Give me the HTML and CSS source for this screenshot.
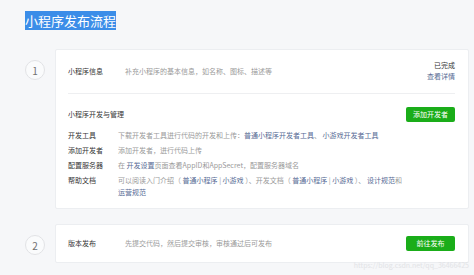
FILE: index.html
```html
<!DOCTYPE html>
<html lang="zh-CN">
<head>
    <meta charset="UTF-8">
    <meta name="viewport" content="width=device-width, initial-scale=1.0">
    <title>小程序发布流程</title>
    <link rel="stylesheet" href="styles.css">
</head>
<body>
    <div class="page">
        <h1 class="title"><span class="selected">小程序发布流程</span></h1>

        <div class="step">
            <div class="step-num"><span class="circle">1</span></div>
            <div class="card">
                <div class="section info">
                    <span class="label">小程序信息</span>
                    <span class="desc">补充小程序的基本信息，如名称、图标、描述等</span>
                    <div class="status">
                        <div>已完成</div>
                        <a class="link">查看详情</a>
                    </div>
                </div>

                <div class="section dev">
                    <div class="dev-head">
                        <span>小程序开发与管理</span>
                        <button class="btn">添加开发者</button>
                    </div>
                    <dl class="rows">
                        <dt>开发工具</dt>
                        <dd>下载开发者工具进行代码的开发和上传：<a class="link">普通小程序开发者工具</a>、 <a class="link">小游戏开发者工具</a></dd>

                        <dt>添加开发者</dt>
                        <dd>添加开发者，进行代码上传</dd>

                        <dt>配置服务器</dt>
                        <dd>在 <a class="link">开发设置</a>页面查看AppID和AppSecret，配置服务器域名</dd>

                        <dt>帮助文档</dt>
                        <dd>可以阅读入门介绍（ <a class="link">普通小程序</a> | <a class="link">小游戏</a> ）、开发文档（ <a class="link">普通小程序</a> | <a class="link">小游戏</a> ）、 <a class="link">设计规范</a>和 <a class="link">运营规范</a></dd>
                    </dl>
                </div>
            </div>
        </div>

        <div class="step">
            <div class="step-num"><span class="circle">2</span></div>
            <div class="card">
                <div class="section publish">
                    <span class="label">版本发布</span>
                    <span class="desc">先提交代码，然后提交审核，审核通过后可发布</span>
                    <button class="btn">前往发布</button>
                </div>
            </div>
        </div>

        <div class="watermark">https://blog.csdn.net/qq_36466425</div>
    </div>
</body>
</html>
```

FILE: styles.css
```css
body {
    margin: 0;
    background: #f6f7f9;
    font-family: "Noto Sans CJK SC", "Noto Sans", sans-serif;
    color: #353535;
}

.page {
    position: relative;
    height: 275px;
    padding: 12px 5px 0 0;
    box-sizing: border-box;
}

.title {
    margin: 0 0 20px 25px;
    font-size: 13px;
    line-height: 17px;
    font-weight: 400;
}

.selected {
    background: #3b8de8;
    color: #fff;
}

.step {
    display: flex;
    margin-bottom: 15px;
}

.step-num {
    width: 55px;
    flex: none;
    padding: 11px 0 0 25px;
    box-sizing: border-box;
}

.circle {
    display: flex;
    align-items: center;
    justify-content: center;
    width: 20px;
    height: 20px;
    box-sizing: border-box;
    border: 1px solid #e2e3e6;
    border-radius: 50%;
    background: #fafbfc;
    font-size: 10px;
    color: #707070;
}

.card {
    flex: 1;
    background: #fff;
    border: 1px solid #eceef1;
    border-radius: 2px;
    padding: 0 13px 0 12px;
}

.section {
    font-size: 7px;
    line-height: 11px;
}

.info {
    display: flex;
    align-items: center;
    padding: 10px 0 11px;
    border-bottom: 1px solid #eeeff1;
}

.label {
    width: 57px;
    flex: none;
}

.desc {
    flex: 1;
    color: #9a9a9a;
}

.status {
    text-align: right;
}

.link {
    color: #576b95;
}

.dev {
    padding: 13px 0 10px;
}

.dev-head {
    display: flex;
    align-items: center;
    justify-content: space-between;
    margin-bottom: 7px;
}

.btn {
    width: 49px;
    height: 15px;
    padding: 0;
    border: none;
    border-radius: 2px;
    background: #1aad19;
    color: #fff;
    font-family: inherit;
    font-size: 7px;
    line-height: 15px;
}

.rows {
    display: grid;
    grid-template-columns: 50px 1fr;
    row-gap: 3px;
    margin: 0;
    line-height: 12px;
}

.rows dt {
    margin: 0;
}

.rows dd {
    margin: 0;
    padding-right: 48px;
    color: #9a9a9a;
}

.publish {
    display: flex;
    align-items: center;
    height: 37px;
}

.watermark {
    position: absolute;
    right: 5px;
    bottom: 5px;
    font-size: 7px;
    color: #e2e3e6;
}
```
